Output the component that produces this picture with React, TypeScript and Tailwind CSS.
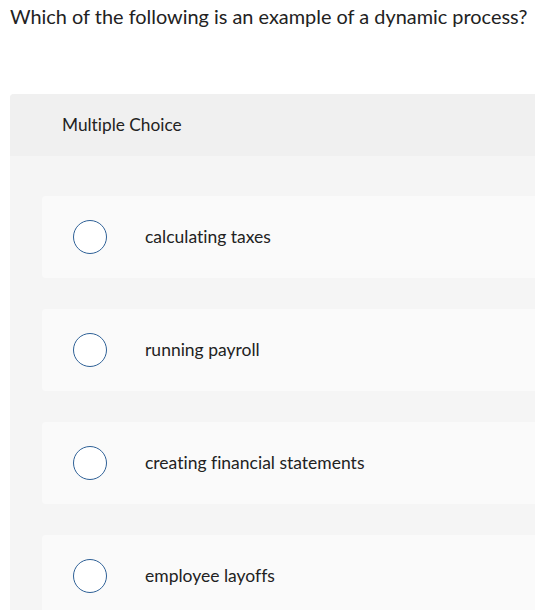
const options = [
  "calculating taxes",
  "running payroll",
  "creating financial statements",
  "employee layoffs",
];

export default function App() {
  return (
    <div className="w-[535px] h-[610px] overflow-hidden bg-white font-['Lato','Open_Sans',sans-serif] text-[#222] [font-variant-ligatures:none]">
      <h1 className="whitespace-nowrap pl-[10px] pt-[3px] text-[19.9px] leading-[26px]">
        Which of the following is an example of a dynamic process?
      </h1>
      <div className="ml-[10px] mt-[65px] w-[540px] rounded-tl-[4px] bg-[#f5f5f5]">
        <div className="flex h-[62px] items-center rounded-tl-[4px] bg-[#f0f0f0] pl-[52px] text-[17.3px]">
          Multiple Choice
        </div>
        <div className="flex flex-col gap-[31px] pl-[32px] pt-[40px] pb-[40px]">
          {options.map((opt) => (
            <div
              key={opt}
              className="flex h-[82px] items-center rounded-[4px] bg-[#fafafa] pl-[31px]"
            >
              <span className="h-[34px] w-[34px] shrink-0 rounded-full border-[1.5px] border-[#2f6197] bg-white" />
              <span className="ml-[38px] text-[17.5px]">{opt}</span>
            </div>
          ))}
        </div>
      </div>
    </div>
  );
}
